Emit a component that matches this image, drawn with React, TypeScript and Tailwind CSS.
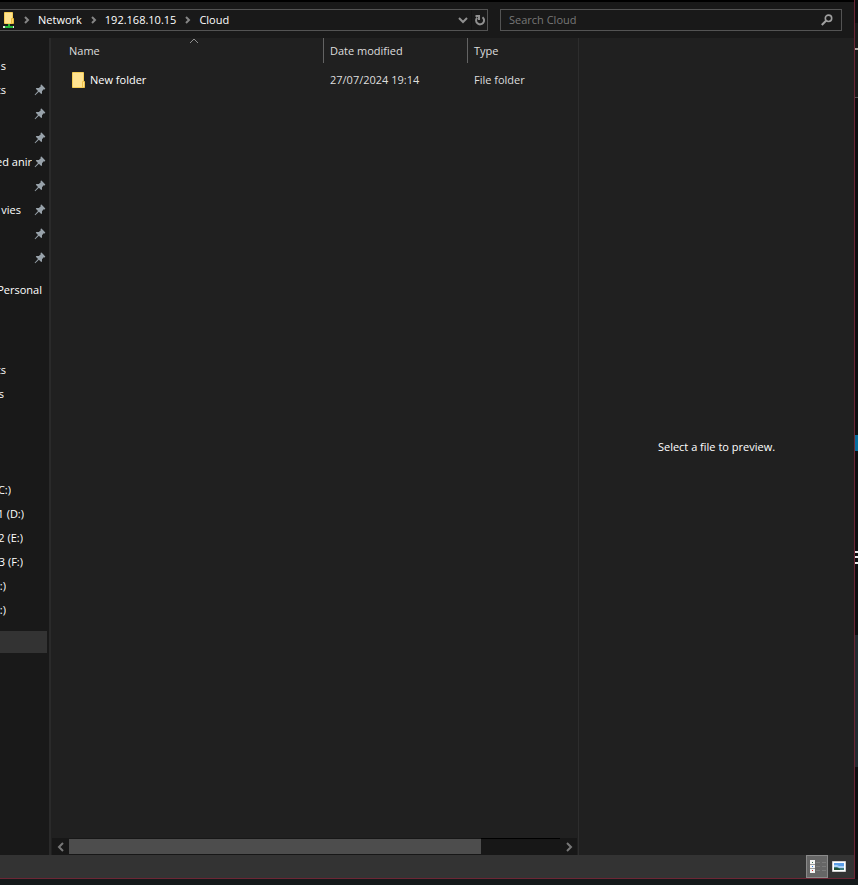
import type { ReactNode } from "react";

type NavItem = { label: string; width: string; pinned?: boolean };

// Each label is cut by the left edge of the window, so it is aligned to its end.
const QUICK_ACCESS: NavItem[] = [
  { label: "s", width: "w-1.5" },
  { label: "ts", width: "w-1.5", pinned: true },
  { label: "", width: "w-6", pinned: true },
  { label: "", width: "w-6", pinned: true },
  { label: "ed anir", width: "w-8", pinned: true },
  { label: "", width: "w-6", pinned: true },
  { label: "vies", width: "w-[21px]", pinned: true },
  { label: "", width: "w-6", pinned: true },
  { label: "", width: "w-6", pinned: true },
];

const PERSONAL: NavItem[] = [{ label: "Personal", width: "w-[42px]" }];

const THIS_PC: NavItem[] = [
  { label: "", width: "w-6" },
  { label: "", width: "w-6" },
  { label: "ts", width: "w-1.5" },
  { label: "s", width: "w-1" },
  { label: "", width: "w-6" },
  { label: "", width: "w-6" },
  { label: "", width: "w-6" },
  { label: "C:)", width: "w-[11px]" },
  { label: "1 (D:)", width: "w-6" },
  { label: "2 (E:)", width: "w-[23px]" },
  { label: "3 (F:)", width: "w-[23px]" },
  { label: ":)", width: "w-1.5" },
  { label: ":)", width: "w-1.5" },
];

function PinIcon() {
  return (
    <svg viewBox="0 0 12 12" className="size-3" fill="#98a2aa" aria-hidden="true">
      <path d="M6.5 1 7.5 0.6 11.3 4.4 10.8 5.4 9.7 5.3 8 7.2 8 9.4 7.2 10 4.9 7.8 1.2 11.2 0.6 10.8 4 6.9 1.8 4.7 2.4 3.9 4.8 4 6.8 2.2Z" />
    </svg>
  );
}

function Chevron({ className, d }: { className: string; d: string }) {
  return (
    <svg viewBox="0 0 10 10" className={className} fill="none" stroke="currentColor" strokeWidth="2" aria-hidden="true">
      <path d={d} />
    </svg>
  );
}

function FolderIcon() {
  return (
    <svg viewBox="0 0 14 16" className="h-4 w-3.5" aria-hidden="true">
      <path d="M0.5 0.5H11.5V15.5H0.5Z" fill="#ffe391" stroke="#f5cd55" />
      <path d="M10.5 9.5H12.5V15.5H10.5Z" fill="#ffe391" stroke="#f0c44a" />
    </svg>
  );
}

function NetworkFolderIcon() {
  return (
    <svg viewBox="0 0 12 17" className="h-[17px] w-3" aria-hidden="true">
      <path d="M1.5 0.5H9.5V11.5H1.5Z" fill="#ffe391" stroke="#f5cd55" />
      <path d="M8.5 6.5H10.5V11.5H8.5Z" fill="#ffd964" stroke="#e9b93b" />
      <path d="M5 12H7V14H11V16H1V14H5Z" fill="#25b638" />
      <path d="M0 14H2V16H0ZM10 14H11V16H10Z" fill="#d8e8d8" />
    </svg>
  );
}

function NavGroup({ items }: { items: NavItem[] }) {
  return (
    <ul>
      {items.map((item, i) => (
        <li key={i} className="flex h-6 items-center">
          <span className={`flex justify-end overflow-hidden whitespace-nowrap ${item.width}`}>{item.label}</span>
          {item.pinned && (
            <span className="mr-[3px] ml-auto">
              <PinIcon />
            </span>
          )}
        </li>
      ))}
    </ul>
  );
}

function Crumb({ children }: { children: ReactNode }) {
  return (
    <li className="flex items-center">
      <Chevron className="mr-1.5 size-2.5 text-[#858585]" d="M3 2 6 5 3 8" />
      <a href="#">{children}</a>
    </li>
  );
}

function AddressBar() {
  return (
    <nav aria-label="Address" className="flex h-[22px] w-[488px] shrink-0 items-center border border-l-0 border-[#535353]">
      <span className="mr-[7px] ml-[3px]">
        <NetworkFolderIcon />
      </span>
      <ol className="flex items-center gap-[7px]">
        <Crumb>Network</Crumb>
        <Crumb>192.168.10.15</Crumb>
        <Crumb>Cloud</Crumb>
      </ol>
      <button type="button" aria-label="Previous locations" className="ml-auto flex h-full w-4 items-center justify-center text-[#909090]">
        <Chevron className="size-2.5" d="M1 3 5 7 9 3" />
      </button>
      <button type="button" aria-label="Refresh" className="flex h-full w-4 items-center justify-center border-l border-[#141414]">
        <svg viewBox="0 0 12 12" className="size-3" fill="none" stroke="#909090" strokeWidth="2" aria-hidden="true">
          <path d="M8.5 3.2A4 4 0 1 1 3.2 3.6M1.5 2H5V6" />
        </svg>
      </button>
    </nav>
  );
}

function SearchBox() {
  return (
    <div className="flex h-[22px] flex-1 items-center border border-[#535353] px-2">
      <input
        type="search"
        aria-label="Search Cloud"
        placeholder="Search Cloud"
        className="min-w-0 flex-1 bg-transparent outline-none placeholder:text-[#777777]"
      />
      <svg viewBox="0 0 12 12" className="size-3" fill="none" stroke="#a0a0a0" aria-hidden="true">
        <circle cx="7.5" cy="4.3" r="3.2" strokeWidth="1.6" />
        <path d="M5 6.8 0.8 11" strokeWidth="2" />
      </svg>
    </div>
  );
}

function FileList() {
  return (
    <main className="flex w-[527px] shrink-0 flex-col">
      <table className="w-full table-fixed border-separate border-spacing-0 text-left text-[#dedede]">
        <thead>
          <tr className="h-[25px]">
            <th className="relative w-[273px] border-r border-[#636363] pl-[18px] font-normal">
              Name
              <svg viewBox="0 0 10 6" className="absolute top-0 left-[138px] h-1.5 w-2.5" fill="none" stroke="#8f8f8f" aria-hidden="true">
                <path d="M1 5 5 1 9 5" />
              </svg>
            </th>
            <th className="w-36 border-r border-[#636363] pl-1.5 font-normal">Date modified</th>
            <th className="pl-1.5 font-normal">Type</th>
          </tr>
        </thead>
        <tbody>
          <tr className="h-[34px]">
            <td className="pl-[21px]">
              <span className="flex items-center gap-1 text-white">
                <FolderIcon />
                New folder
              </span>
            </td>
            <td className="pl-1.5">27/07/2024 19:14</td>
            <td className="pl-1.5">File folder</td>
          </tr>
        </tbody>
      </table>
      <div className="mt-auto mr-px ml-px flex h-[17px] bg-[#171717] text-[#777777]">
        <button type="button" aria-label="Scroll left" className="flex w-[17px] items-center justify-center">
          <Chevron className="size-2.5" d="M7 1 3 5 7 9" />
        </button>
        <div className="flex-1 border-t border-black">
          <div className="-mt-px h-4 w-[412px] border-t border-[#171717] bg-[#4d4d4d]" />
        </div>
        <button type="button" aria-label="Scroll right" className="flex w-[17px] items-center justify-center">
          <Chevron className="size-2.5" d="M3 1 7 5 3 9" />
        </button>
      </div>
    </main>
  );
}

function StatusBar() {
  return (
    <footer className="flex h-[23px] items-center justify-end gap-1 bg-[#333333] pr-2">
      <button type="button" aria-label="Details view" className="flex h-full w-[22px] items-center justify-center border border-[#8a8a8a] bg-[#666666]">
        <svg viewBox="0 0 18 14" className="h-3.5 w-[18px]" aria-hidden="true">
          <path d="M2 0H7V13H2Z" fill="#f4f4f4" />
          <path d="M2 4H7V5H2ZM2 8H7V9H2Z" fill="#999999" />
          <path d="M4 2H5V3H4Z" fill="#356a4a" />
          <path d="M4 6H5V7H4Z" fill="#2878e8" />
          <path d="M4 10H5V11H4Z" fill="#d22222" />
          <path d="M8 2.5H12M14 2.5H18M8 6.5H12M14 6.5H18M8 10.5H12M14 10.5H18" stroke="#7a7a7a" />
        </svg>
      </button>
      <button type="button" aria-label="Large icons view">
        <svg viewBox="0 0 14 11" className="h-[11px] w-3.5" aria-hidden="true">
          <path d="M0.5 0.5H13.5V10.5H0.5Z" fill="#ffffff" stroke="#cfcfcf" />
          <path d="M2 2H12V9H2Z" fill="#5c9ee8" />
          <path d="M2 4H5L7 5H12V7H2Z" fill="#a9d0f7" />
          <path d="M2 6H5L7 7H12V9H2Z" fill="#3d7a7c" />
          <path d="M2 7H6L8 8V9H2Z" fill="#1f5238" />
        </svg>
      </button>
    </footer>
  );
}

// Slice of the window that lies behind the explorer.
function BackgroundWindow() {
  return (
    <div className="flex w-[3px] shrink-0 flex-col bg-[#0e0e10]">
      <div className="mt-[23px] h-[25px] bg-[#1a1a1a]" />
      <div className="h-0.5 bg-[#b0aaa4]" />
      <div className="h-[47px] bg-[#1a1a1a]" />
      <div className="h-px bg-[#555555]" />
      <div className="mt-[337px] h-4 bg-[#086c9c]" />
      <div className="mt-[100px] h-0.5 bg-[#e8e8e8]" />
      <div className="mt-[3px] h-0.5 bg-[#e8e8e8]" />
      <div className="mt-1 h-0.5 bg-[#e8e8e8]" />
      <div className="mt-[71px] h-[132px] bg-[#232b30]" />
    </div>
  );
}

export default function App() {
  return (
    <div className="flex h-screen overflow-hidden bg-[#14191a] pb-1.5 font-['Open_Sans',sans-serif] text-[11px] leading-4 text-white">
      <div className="flex min-w-0 flex-1 flex-col border-r border-b border-[#6d2635] bg-[#191919]">
        <header className="flex h-[38px] shrink-0 gap-3 border-t-2 border-black pt-[7px] pr-3">
          <AddressBar />
          <SearchBox />
        </header>
        <div className="flex min-h-0 flex-1 bg-[#202020]">
          <aside className="flex w-[51px] shrink-0 flex-col gap-2 border-r-2 border-[#2a2a2a] bg-[#191919] pt-4">
            <NavGroup items={QUICK_ACCESS} />
            <NavGroup items={PERSONAL} />
            <NavGroup items={THIS_PC} />
            <div className="mt-px mr-0.5 h-[22px] bg-[#333333]" />
          </aside>
          <FileList />
          <section className="flex flex-1 items-center justify-center border-l border-[#2d2d2d]">
            <p>Select a file to preview.</p>
          </section>
        </div>
        <StatusBar />
      </div>
      <BackgroundWindow />
    </div>
  );
}
